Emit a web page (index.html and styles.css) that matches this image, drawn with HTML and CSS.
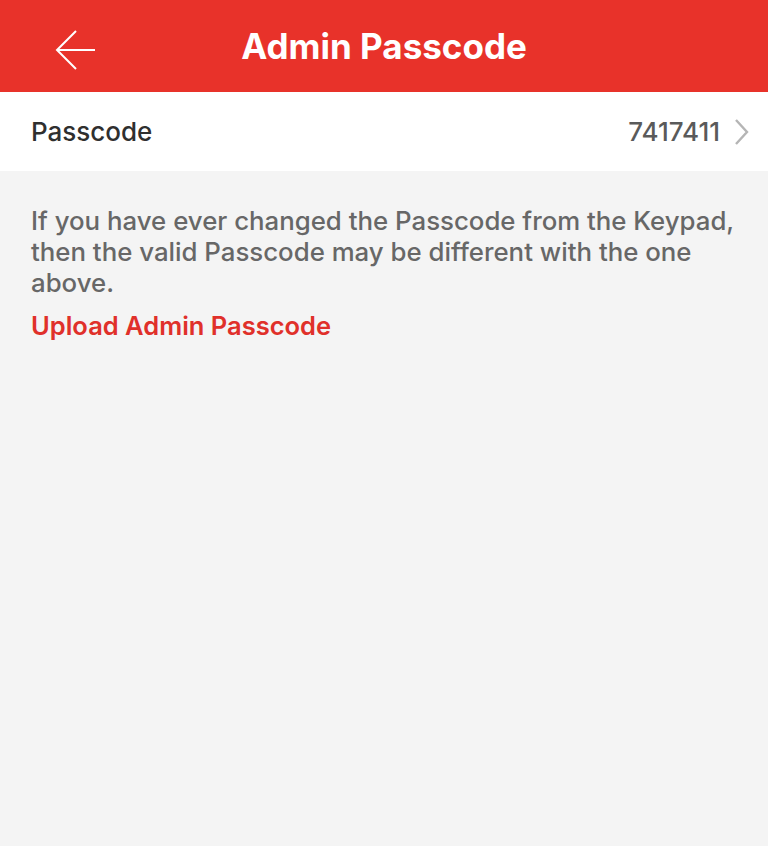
FILE: index.html
```html
<!DOCTYPE html>
<html lang="en">
<head>
    <meta charset="UTF-8">
    <meta name="viewport" content="width=device-width, initial-scale=1.0">
    <title>Admin Passcode</title>
    <link rel="stylesheet" href="styles.css">
</head>
<body>
    <div class="header">
        <a href="#back" class="back">
            <svg width="44" height="44" viewBox="0 0 44 44">
                <path d="M42 22 H4 M23 3 L4 22 L23 41" fill="none" stroke="#fff" stroke-width="2"/>
            </svg>
        </a>
        <h1>Admin Passcode</h1>
    </div>
    <div class="row">
        <span class="label">Passcode</span>
        <span class="value">7417411</span>
        <svg class="chevron" width="16" height="28" viewBox="0 0 16 28">
            <path d="M2 2 L13 14 L2 26" fill="none" stroke="#b5b5b5" stroke-width="2.4"/>
        </svg>
    </div>
    <div class="note">
        <p>If you have ever changed the Passcode from the Keypad, then the valid Passcode may be different with the one above.</p>
        <a href="#upload" class="upload">Upload Admin Passcode</a>
    </div>
</body>
</html>
```

FILE: styles.css
```css
body {
    margin: 0;
    font-family: Inter, Roboto, sans-serif;
    background-color: #f4f4f4;
}
.header {
    height: 92px;
    background-color: #e8322a;
    display: flex;
    align-items: center;
    justify-content: center;
    position: relative;
}
.header h1 {
    margin: 0;
    color: #fff;
    font-size: 35px;
    font-weight: 700;
}
.back {
    position: absolute;
    left: 53px;
    top: 28px;
    display: block;
    height: 44px;
}
.row {
    height: 79px;
    background-color: #fff;
    display: flex;
    align-items: center;
    padding: 0 18px 0 31px;
}
.label {
    flex: 1;
    font-size: 26px;
    font-weight: 500;
    color: #2f2f2f;
}
.value {
    font-size: 26px;
    font-weight: 500;
    color: #5a5a5a;
    margin-right: 14px;
}
.chevron {
    display: block;
}
.note {
    padding: 34px 20px 34px 31px;
}
.note p {
    margin: 0 0 10px;
    font-size: 25.8px;
    font-weight: 500;
    line-height: 31px;
    color: #676767;
}
.upload {
    display: block;
    font-size: 25.5px;
    line-height: 36px;
    color: #e0302a;
    text-decoration: none;
    font-weight: 600;
}
```
